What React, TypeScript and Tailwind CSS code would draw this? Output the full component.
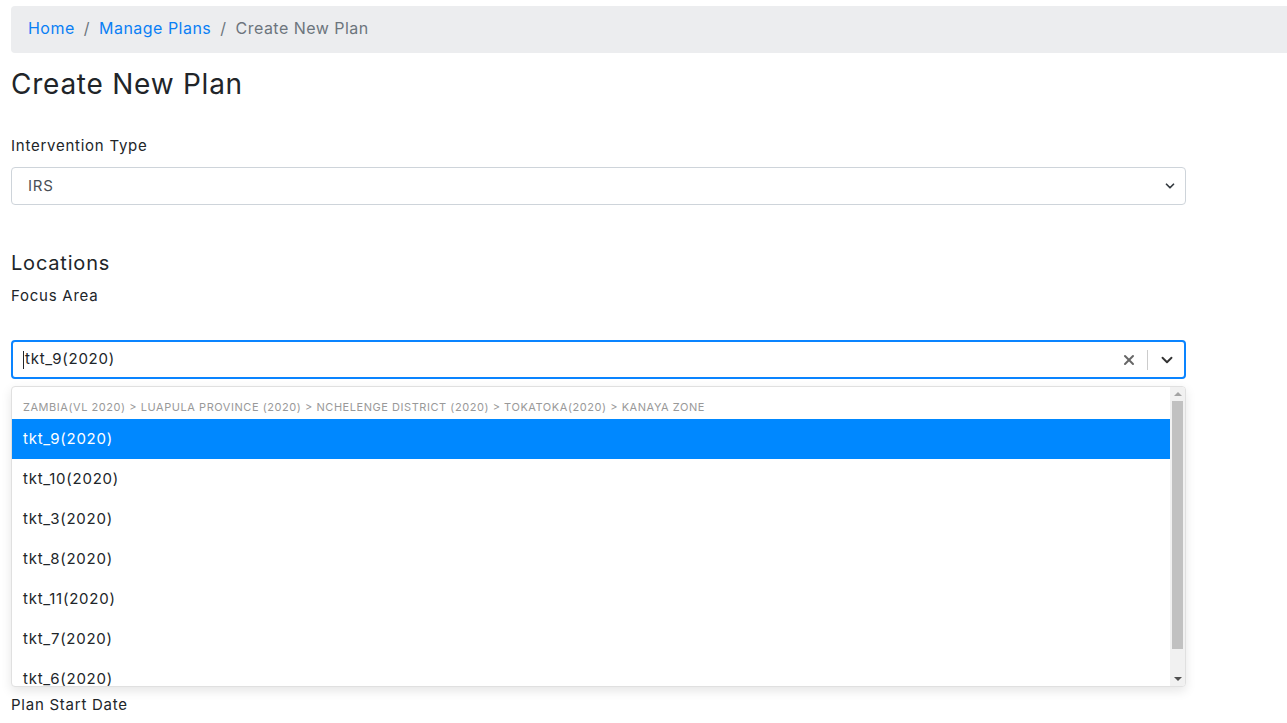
import { X, ChevronDown } from "lucide-react"

const options = ["tkt_9(2020)", "tkt_10(2020)", "tkt_3(2020)", "tkt_8(2020)", "tkt_11(2020)", "tkt_7(2020)", "tkt_6(2020)"]

export default function App() {
  return (
    <div className="min-h-screen bg-white text-[#212529] overflow-hidden" style={{ fontFamily: "Inter, 'Noto Sans', sans-serif" }}>
      <div className="pl-[11px] pt-[6px]">
        <nav className="h-[47px] bg-[#ecedef] rounded-l-[4px] flex items-center pl-[17px] pb-[3px] text-[16px] tracking-[0.03em] gap-[9px]">
          <span className="text-[#0a7ff5]">Home</span>
          <span className="text-[#6c757d]">/</span>
          <span className="text-[#0a7ff5]">Manage Plans</span>
          <span className="text-[#6c757d]">/</span>
          <span className="text-[#6c757d]">Create New Plan</span>
        </nav>
      </div>

      <div className="pl-[11px] w-[1186px]">
        <h1 className="text-[28px] leading-[34px] mt-[14px] tracking-[0.027em]">Create New Plan</h1>

        <div className="mt-[34px] text-[15px] leading-[22px] tracking-[0.05em]">Intervention Type</div>
        <div className="mt-[10px] h-[38px] border border-[#ced4da] rounded-[4px] flex items-center justify-between pl-[16px] pr-[8px] text-[15px] tracking-[0.05em] text-[#495057]">
          <span>IRS</span>
          <ChevronDown size={14} strokeWidth={3} className="text-[#343a40]" />
        </div>

        <h2 className="mt-[45px] text-[20px] leading-[26px] tracking-[0.04em]">Locations</h2>
        <div className="mt-[9px] text-[15px] leading-[22px] tracking-[0.05em]">Focus Area</div>

        <div className="relative mt-[33px]">
          <div className="h-[39px] border-2 border-[#0a84ff] rounded-[4px] flex items-center pl-[10px] text-[15px] tracking-[0.05em]">
            <span className="w-px h-[18px] bg-[#212529] mr-px" />
            <span className="flex-1">tkt_9(2020)</span>
            <X size={16} strokeWidth={3} className="text-[#666]" />
            <span className="w-px h-[20px] bg-[#ccc] mx-[10px]" />
            <ChevronDown size={18} strokeWidth={2.5} className="text-[#333] mr-[8px]" />
          </div>

          <div className="absolute left-0 right-0 top-[46px] h-[301px] bg-white rounded-[4px] border border-[#e0e0e0] shadow-[0_4px_11px_rgba(0,0,0,0.1)] flex overflow-hidden">
            <div className="flex-1 overflow-hidden">
              <div className="h-[32px] flex items-end pb-[4px] pl-[11px] text-[11px] tracking-[0.05em] text-[#999] uppercase">
                Zambia(VL 2020) &gt; Luapula Province (2020) &gt; Nchelenge District (2020) &gt; Tokatoka(2020) &gt; Kanaya Zone
              </div>
              {options.map((o, i) => (
                <div key={o} className={`h-[40px] flex items-center pl-[11px] text-[15px] tracking-[0.05em] ${i === 0 ? "bg-[#0088ff] text-white" : ""}`}>
                  {o}
                </div>
              ))}
            </div>
            <div className="w-[15px] bg-[#f1f1f1] flex flex-col items-center">
              <div className="h-[14px] flex items-center justify-center">
                <div className="w-0 h-0 border-l-[4px] border-r-[4px] border-b-[4px] border-l-transparent border-r-transparent border-b-[#a3a3a3]" />
              </div>
              <div className="w-[11px] h-[248px] bg-[#c1c1c1]" />
              <div className="flex-1" />
              <div className="h-[14px] flex items-center justify-center">
                <div className="w-0 h-0 border-l-[4px] border-r-[4px] border-t-[4px] border-l-transparent border-r-transparent border-t-[#505050]" />
              </div>
            </div>
          </div>
        </div>

        <div className="mt-[315px] text-[15px] leading-[22px] tracking-[0.05em]">Plan Start Date</div>
      </div>
    </div>
  )
}
